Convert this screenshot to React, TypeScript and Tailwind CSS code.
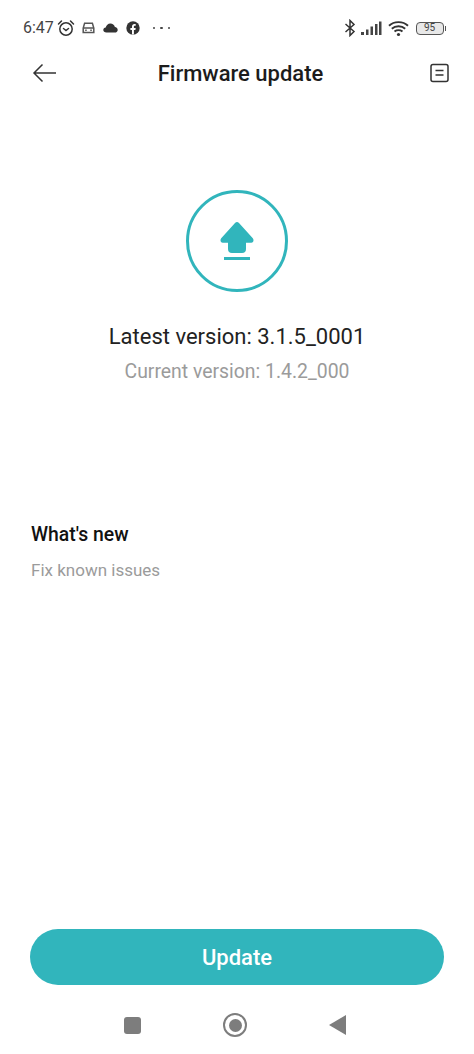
const FONT = "font-['Roboto',sans-serif]";

function StatusBar() {
  return (
    <div className="flex h-[18px] items-center justify-between pl-[23px] pr-[28px] text-[#3a3a3a]">
      <div className="flex items-center">
        <span className="text-[16px] leading-[18px] text-[#444]">6:47</span>
        <svg className="ml-[3px]" width="18" height="18" viewBox="0 0 18 18" fill="none" stroke="#333" strokeWidth="1.5">
          <circle cx="9" cy="10" r="6.2" />
          <path d="M6.5 9.5 9 11.5l2.5-2" strokeLinecap="round" />
          <path d="M1.5 5 4.5 2M16.5 5l-3-3" strokeLinecap="round" />
        </svg>
        <svg className="ml-[7px]" width="13" height="12" viewBox="0 0 13 12" fill="none" stroke="#555" strokeWidth="1.5">
          <path d="M2.600 1.200h7.800L11.800 6v4.600H1.200V6zM1.200 6h10.600" />
          <path d="M3.200 8.300h1.500M8.300 8.300h1.500" />
        </svg>
        <svg className="ml-[8px]" width="15" height="10" viewBox="0 0 15 10" fill="#333">
          <path d="M3.4 9.5C1.6 9.5.3 8.4.3 7c0-1.300 1-2.300 2.400-2.400C3.300 2.300 5 .6 7.400.6c2.200 0 3.900 1.400 4.500 3.500 1.600.1 2.800 1.300 2.800 2.800 0 1.500-1.200 2.600-2.800 2.600z" />
        </svg>
        <svg className="ml-[8px]" width="14" height="14" viewBox="0 0 14 14">
          <circle cx="7" cy="7" r="6.700" fill="#333" />
          <path d="M6 13.600V8.900H4.400V7H6V5.500C6 3.900 7 3 8.400 3c.6 0 1.100.1 1.300.1v1.700h-.9c-.7 0-.9.4-.9.9V7h1.800l-.3 1.900H7.900v4.700z" fill="#fff" />
        </svg>
        <div className="ml-[13px] flex items-center gap-[5px]">
          <span className="size-[2.500px] rounded-full bg-[#444]" />
          <span className="size-[2.500px] rounded-full bg-[#444]" />
          <span className="size-[2.500px] rounded-full bg-[#444]" />
        </div>
      </div>
      <div className="flex items-center">
        <svg width="12" height="18" viewBox="0 0 12 18" fill="none" stroke="#333" strokeWidth="1.500">
          <path d="M1.500 5 10 12.500 6 16.500V1.500l4 4-8.500 7.500" />
        </svg>
        <svg className="ml-[5px]" width="21" height="14" viewBox="0 0 21 14" fill="#444">
          <rect x="0" y="11" width="3" height="3" />
          <rect x="5" y="8.500" width="2.500" height="5.500" />
          <rect x="9.500" y="5.500" width="2.500" height="8.500" />
          <rect x="14" y="3" width="2.500" height="11" />
          <rect x="18" y="0.500" width="2.500" height="13.500" />
        </svg>
        <svg className="ml-[6px]" width="21" height="17" viewBox="0 0 21 17" fill="none" stroke="#333" strokeWidth="1.900">
          <path d="M1 5.800C6 .9 15 .9 20 5.800" />
          <path d="M3.800 8.700c3.600-3.200 9.800-3.200 13.400 0" />
          <path d="M6.500 11.500c2.200-1.700 5.800-1.700 8 0" />
          <circle cx="10.500" cy="14.500" r="1.600" fill="#333" stroke="none" />
        </svg>
        <div className="ml-[7px] flex items-center">
          <div className="flex h-[13px] w-[28px] items-center justify-center rounded-[4px] border border-[#555] bg-[#e8e8e8] text-[10px] leading-none text-[#444]">
            95
          </div>
          <span className="ml-[1px] h-[5px] w-[1.500px] bg-[#555]" />
        </div>
      </div>
    </div>
  );
}

function Header() {
  return (
    <div className="mt-[21px] flex h-[30px] items-center px-[25px]">
      <div className="flex-1 pl-[7px]">
        <svg width="25" height="20" viewBox="0 0 25 20" fill="none" stroke="#333" strokeWidth="1.500">
          <path d="M24 10H2M10.500 1.500 2 10l8.500 8.500" />
        </svg>
      </div>
      <h1 className="text-[22px] font-medium text-[#1c1c1c]">Firmware update</h1>
      <div className="flex flex-1 justify-end">
        <svg width="19" height="20" viewBox="0 0 19 20" fill="none" stroke="#333" strokeWidth="1.500">
          <rect x="1" y="1.500" width="17" height="17" rx="2" />
          <path d="M5.500 7.500h8M5.500 12h8" />
        </svg>
      </div>
    </div>
  );
}

export default function App() {
  return (
    <div className={`flex h-[1054px] w-[474px] flex-col bg-white pt-[19px] ${FONT}`}>
      <StatusBar />
      <Header />

      <div className="mt-[102px] flex flex-col items-center">
        <div className="flex size-[102px] items-center justify-center rounded-full border-[3px] border-[#31b5bc]">
          <svg width="34" height="38" viewBox="0 0 34 38" fill="#31b5bc">
            <path d="M15 .9a3 3 0 0 1 4 0l13.800 15.400c1.400 1.600.6 4.400-1.500 4.400H26V27a4 4 0 0 1-4 4H12a4 4 0 0 1-4-4v-6.300H2.700c-2.100 0-2.900-2.800-1.500-4.400z" />
            <rect x="4" y="35" width="26" height="3" />
          </svg>
        </div>
        <p className="mt-[30px] text-[22px] leading-[30px] text-[#222]">Latest version: 3.1.5_0001</p>
        <p className="mt-[8px] text-[19.400px] leading-[24px] text-[#9b9b9b]">Current version: 1.4.2_000</p>
      </div>

      <div className="mt-[139px] px-[31px]">
        <h2 className="text-[19.400px] font-medium leading-[24px] text-[#111]">What's new</h2>
        <p className="mt-[11px] text-[17px] leading-[24px] text-[#9b9b9b]">Fix known issues</p>
      </div>

      <div className="mt-auto px-[30px]">
        <button type="button" className="h-[56px] w-full rounded-[28px] bg-[#31b5bc] text-[22px] font-medium text-white">
          Update
        </button>
      </div>

      <div className="mb-[17px] mt-[28px] flex h-[24px] items-center justify-between pl-[124px] pr-[128px]">
        <span className="size-[17px] rounded-[3px] bg-[#7d7d7d]" />
        <span className="flex size-[24px] items-center justify-center rounded-full border-[2.500px] border-[#7d7d7d]">
          <span className="size-[13px] rounded-full bg-[#7d7d7d]" />
        </span>
        <svg width="17" height="20" viewBox="0 0 17 20" fill="#7d7d7d">
          <path d="M17 0v20L0 10z" />
        </svg>
      </div>
    </div>
  );
}
